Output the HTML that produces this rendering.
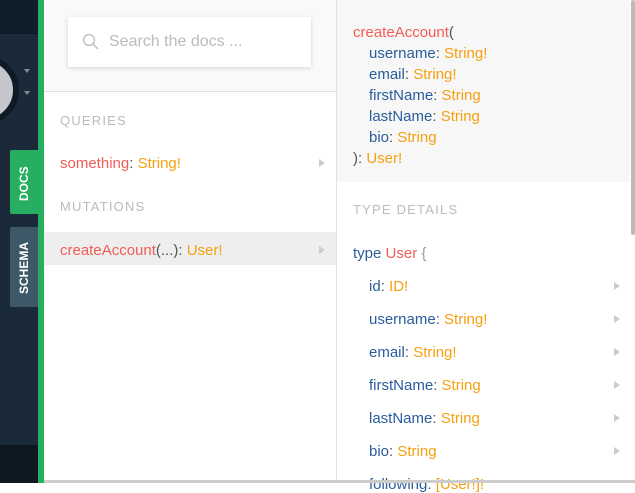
<!DOCTYPE html><html><head><style>
*{margin:0;padding:0;box-sizing:border-box}
body{width:635px;height:483px;overflow:hidden;position:relative;font-family:"Liberation Sans",sans-serif;font-size:15px;background:#fff}
.a{position:absolute;white-space:nowrap}
.r{color:#f25c54}.o{color:#f5a00f}.b{color:#2a5d9c}.g{color:#555}
.h{color:#bbb;font-size:13px;letter-spacing:1.2px}
.ar{position:absolute;width:0;height:0;border-top:4px solid transparent;border-bottom:4px solid transparent;border-left:6px solid #ccc}
</style></head><body>
<div class="a" style="left:0;top:0;width:38px;height:483px;background:#1a2a3a"></div>
<div class="a" style="left:0;top:0;width:38px;height:34px;background:#0f1e2b;border-bottom:1px solid #0b1620"></div>
<div class="a" style="left:0;top:445px;width:38px;height:38px;background:#0d1822"></div>
<div class="a" style="left:-51px;top:55px;width:70px;height:70px;border-radius:50%;background:#c4c6cb;border:6px solid #0e1a24"></div>
<div class="a" style="left:24px;top:69px;border-left:3px solid transparent;border-right:3px solid transparent;border-top:4px solid #888"></div>
<div class="a" style="left:24px;top:91px;border-left:3px solid transparent;border-right:3px solid transparent;border-top:4px solid #888"></div>
<div class="a" style="left:10px;top:150px;width:28px;height:64px;background:#27ae60;border-radius:2px 0 0 2px"></div>
<div class="a" style="left:17px;top:201px;transform:rotate(-90deg);transform-origin:0 0;color:#fff;font-weight:bold;font-size:12px">DOCS</div>
<div class="a" style="left:10px;top:227px;width:28px;height:80px;background:#3d5866;border-radius:2px 0 0 2px"></div>
<div class="a" style="left:17px;top:294px;transform:rotate(-90deg);transform-origin:0 0;color:#fff;font-weight:bold;font-size:12px">SCHEMA</div>
<div class="a" style="left:38px;top:0;width:6px;height:483px;background:#27ae60"></div>
<div class="a" style="left:44px;top:0;width:292px;height:92px;background:#f9f9f9;border-bottom:1px solid #e0e0e0"></div>
<div class="a" style="left:68px;top:17px;width:243px;height:50px;background:#fff;box-shadow:0 1px 4px rgba(0,0,0,.15)"></div>
<svg class="a" style="left:82px;top:33px" width="18" height="18"><circle cx="7" cy="7" r="5.5" fill="none" stroke="#bbb" stroke-width="1.3"/><line x1="11" y1="11" x2="16" y2="16" stroke="#bbb" stroke-width="1.3"/></svg>
<div class="a" style="left:109px;top:33px;font-size:16px;color:#bbb">Search the docs ...</div>
<div class="a" style="left:336px;top:0;width:1px;height:483px;background:#e0e0e0"></div>
<div class="a h" style="left:60px;top:113px">QUERIES</div>
<div class="a" style="left:60px;top:155px"><span class="r">something</span><span class="g">: </span><span class="o">String!</span></div>
<div class="ar" style="left:319px;top:159px"></div>
<div class="a h" style="left:60px;top:199px">MUTATIONS</div>
<div class="a" style="left:44px;top:232px;width:292px;height:33px;background:#eee"></div>
<div class="a" style="left:60px;top:242px"><span class="r">createAccount</span><span class="g">(...): </span><span class="o">User!</span></div>
<div class="ar" style="left:319px;top:246px"></div>
<div class="a" style="left:337px;top:0;width:293px;height:182px;background:#f7f7f7"></div>
<div class="a" style="left:631px;top:0;width:4px;height:235px;background:#bbb;border-radius:2px"></div>
<div class="a" style="left:353px;top:22px;line-height:21px"><span class="r">createAccount</span><span class="g">(</span><br>
<span style="padding-left:16px" class="b">username</span><span class="g">: </span><span class="o">String!</span><br>
<span style="padding-left:16px" class="b">email</span><span class="g">: </span><span class="o">String!</span><br>
<span style="padding-left:16px" class="b">firstName</span><span class="g">: </span><span class="o">String</span><br>
<span style="padding-left:16px" class="b">lastName</span><span class="g">: </span><span class="o">String</span><br>
<span style="padding-left:16px" class="b">bio</span><span class="g">: </span><span class="o">String</span><br>
<span class="g">): </span><span class="o">User!</span></div>
<div class="a h" style="left:353px;top:202px">TYPE DETAILS</div>
<div class="a" style="left:353px;top:245px"><span class="b">type </span><span class="r">User</span><span style="color:#999"> {</span></div>
<div class="a" style="left:369px;top:278px"><span class="b">id</span><span class="g">: </span><span class="o">ID!</span></div>
<div class="a" style="left:369px;top:311px"><span class="b">username</span><span class="g">: </span><span class="o">String!</span></div>
<div class="a" style="left:369px;top:344px"><span class="b">email</span><span class="g">: </span><span class="o">String!</span></div>
<div class="a" style="left:369px;top:377px"><span class="b">firstName</span><span class="g">: </span><span class="o">String</span></div>
<div class="a" style="left:369px;top:410px"><span class="b">lastName</span><span class="g">: </span><span class="o">String</span></div>
<div class="a" style="left:369px;top:443px"><span class="b">bio</span><span class="g">: </span><span class="o">String</span></div>
<div class="a" style="left:369px;top:476px"><span class="b">following</span><span class="g">: </span><span class="o">[User!]!</span></div>
<div class="ar" style="left:614px;top:282px"></div><div class="ar" style="left:614px;top:315px"></div><div class="ar" style="left:614px;top:348px"></div><div class="ar" style="left:614px;top:381px"></div><div class="ar" style="left:614px;top:414px"></div><div class="ar" style="left:614px;top:447px"></div>
<div class="a" style="left:44px;top:480px;width:591px;height:3px;background:#ccc"></div>
</body></html>
